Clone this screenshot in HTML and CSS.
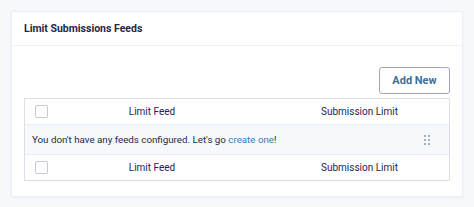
FILE: index.html
```html
<!DOCTYPE html>
<html>
<head>
<meta charset="utf-8">
<link rel="stylesheet" href="styles.css">
</head>
<body>
<div class="card">
  <div class="card-header">
    <h3 class="title">Limit Submissions Feeds</h3>
  </div>
  <div class="card-body">
    <div class="actions">
      <button class="btn">Add New</button>
    </div>
    <div class="table">
      <div class="row head">
        <div class="cell cb"><span class="checkbox"></span></div>
        <div class="cell col1">Limit Feed</div>
        <div class="cell col2">Submission Limit</div>
      </div>
      <div class="row empty">
        <div class="msg">You don't have any feeds configured. Let's go <a href="#" class="link">create one</a>!</div>
        <div class="handle">
          <span></span><span></span><span></span><span></span><span></span><span></span>
        </div>
      </div>
      <div class="row foot">
        <div class="cell cb"><span class="checkbox"></span></div>
        <div class="cell col1">Limit Feed</div>
        <div class="cell col2">Submission Limit</div>
      </div>
    </div>
  </div>
</div>
</body>
</html>
```
FILE: styles.css
```css
html, body {
  margin: 0;
  padding: 0;
}
body {
  background: #f6f8fc;
  font-family: Roboto, "Liberation Sans", sans-serif;
  color: #242748;
  padding: 11px 11px 11px 11px;
  width: 452px;
}
.card {
  background: #fff;
  border: 1px solid #eceef5;
  border-radius: 3px;
  box-shadow: 0 1px 3px rgba(30, 40, 90, 0.04);
}
.card-header {
  height: 33px;
  border-bottom: 1px solid #eef0f6;
  display: flex;
  align-items: center;
  padding-left: 12px;
}
.title {
  margin: 0;
  font-size: 10.5px;
  font-weight: 700;
  color: #242748;
}
.card-body {
  padding: 21px 12px 15px 12px;
}
.actions {
  display: flex;
  justify-content: flex-end;
  margin-bottom: 4px;
}
.btn {
  width: 71px;
  height: 27px;
  background: #fff;
  border: 1px solid #9fa4bf;
  border-radius: 3px;
  font-family: inherit;
  font-size: 11px;
  font-weight: 700;
  color: #3e6e9a;
  padding: 0;
}
.table {
  border: 1px solid #dcdfe8;
}
.row {
  display: grid;
  grid-template-columns: 30px 194px 1fr;
  align-items: center;
  font-size: 10px;
}
.head {
  height: 25px;
  border-bottom: 1px solid #eceef4;
}
.foot {
  height: 25px;
  border-top: 1px solid #eceef4;
}
.cell {
  text-align: center;
}
.cb {
  display: flex;
  justify-content: center;
  padding-left: 2px;
}
.col2 {
  padding-left: 21px;
}
.checkbox {
  display: block;
  width: 11px;
  height: 11px;
  border: 1px solid #c7c9d6;
  border-radius: 2px;
  background: #fff;
}
.empty {
  display: flex;
  justify-content: space-between;
  align-items: center;
  height: 29px;
  background: #f6f9fc;
  padding: 0 19px 0 7px;
}
.msg {
  font-size: 9.75px;
  color: #242748;
}
.link {
  color: #3a79b5;
  text-decoration: none;
}
.handle {
  display: grid;
  grid-template-columns: 2px 2px;
  column-gap: 2px;
  row-gap: 2px;
}
.handle span {
  width: 2px;
  height: 2px;
  background: #a9acbd;
}
```
